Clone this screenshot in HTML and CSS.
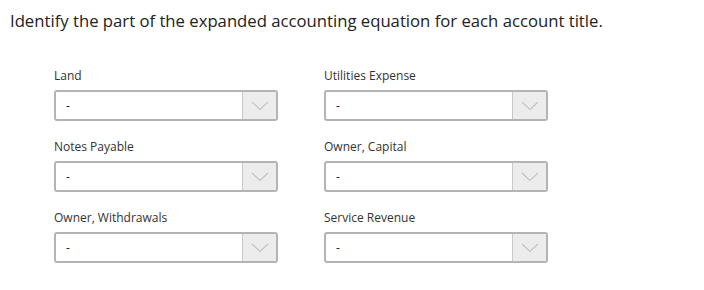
FILE: index.html
```html
<!DOCTYPE html>
<html>
<head>
  <title>Expanded Accounting Equation</title>
  <link rel="stylesheet" href="styles.css">
</head>
<body>

<h2 class="prompt">Identify the part of the expanded accounting equation for each account title.</h2>

<div class="fields">
  <div class="field">
    <label>Land</label>
    <div class="dropdown"><span class="value">-</span><span class="arrow"><svg width="18" height="10" viewBox="0 0 18 10"><path d="M1 1 L9 8.5 L17 1" fill="none" stroke="#c3c3c3" stroke-width="1.2"/></svg></span></div>
  </div>
  <div class="field">
    <label>Utilities Expense</label>
    <div class="dropdown"><span class="value">-</span><span class="arrow"><svg width="18" height="10" viewBox="0 0 18 10"><path d="M1 1 L9 8.5 L17 1" fill="none" stroke="#c3c3c3" stroke-width="1.2"/></svg></span></div>
  </div>
  <div class="field">
    <label>Notes Payable</label>
    <div class="dropdown"><span class="value">-</span><span class="arrow"><svg width="18" height="10" viewBox="0 0 18 10"><path d="M1 1 L9 8.5 L17 1" fill="none" stroke="#c3c3c3" stroke-width="1.2"/></svg></span></div>
  </div>
  <div class="field">
    <label>Owner, Capital</label>
    <div class="dropdown"><span class="value">-</span><span class="arrow"><svg width="18" height="10" viewBox="0 0 18 10"><path d="M1 1 L9 8.5 L17 1" fill="none" stroke="#c3c3c3" stroke-width="1.2"/></svg></span></div>
  </div>
  <div class="field">
    <label>Owner, Withdrawals</label>
    <div class="dropdown"><span class="value">-</span><span class="arrow"><svg width="18" height="10" viewBox="0 0 18 10"><path d="M1 1 L9 8.5 L17 1" fill="none" stroke="#c3c3c3" stroke-width="1.2"/></svg></span></div>
  </div>
  <div class="field">
    <label>Service Revenue</label>
    <div class="dropdown"><span class="value">-</span><span class="arrow"><svg width="18" height="10" viewBox="0 0 18 10"><path d="M1 1 L9 8.5 L17 1" fill="none" stroke="#c3c3c3" stroke-width="1.2"/></svg></span></div>
  </div>
</div>

</body>
</html>
```

FILE: styles.css
```css
body { margin: 0; background: #fff; font-family: "Open Sans", "Noto Sans", sans-serif; color: #222; }
.prompt { margin: 0; padding: 9px 0 0 10px; font-size: 16.7px; font-weight: normal; line-height: 24px; color: #222; }
.fields { display: grid; grid-template-columns: 224px 224px; column-gap: 46px; row-gap: 18px; padding: 35px 0 0 54px; }
.field label { display: block; font-size: 12px; line-height: 16px; color: #333; margin-bottom: 6px; }
.dropdown { display: flex; height: 31px; box-sizing: border-box; border: 2px solid #b4b4b4; border-radius: 3px; background: #fff; }
.dropdown .value { flex: 1; padding-left: 10px; font-size: 12px; line-height: 27px; color: #222; }
.dropdown .arrow { width: 33px; display: flex; align-items: center; justify-content: center; background: #ececec; border-left: 1px solid #c8c8c8; }
```
